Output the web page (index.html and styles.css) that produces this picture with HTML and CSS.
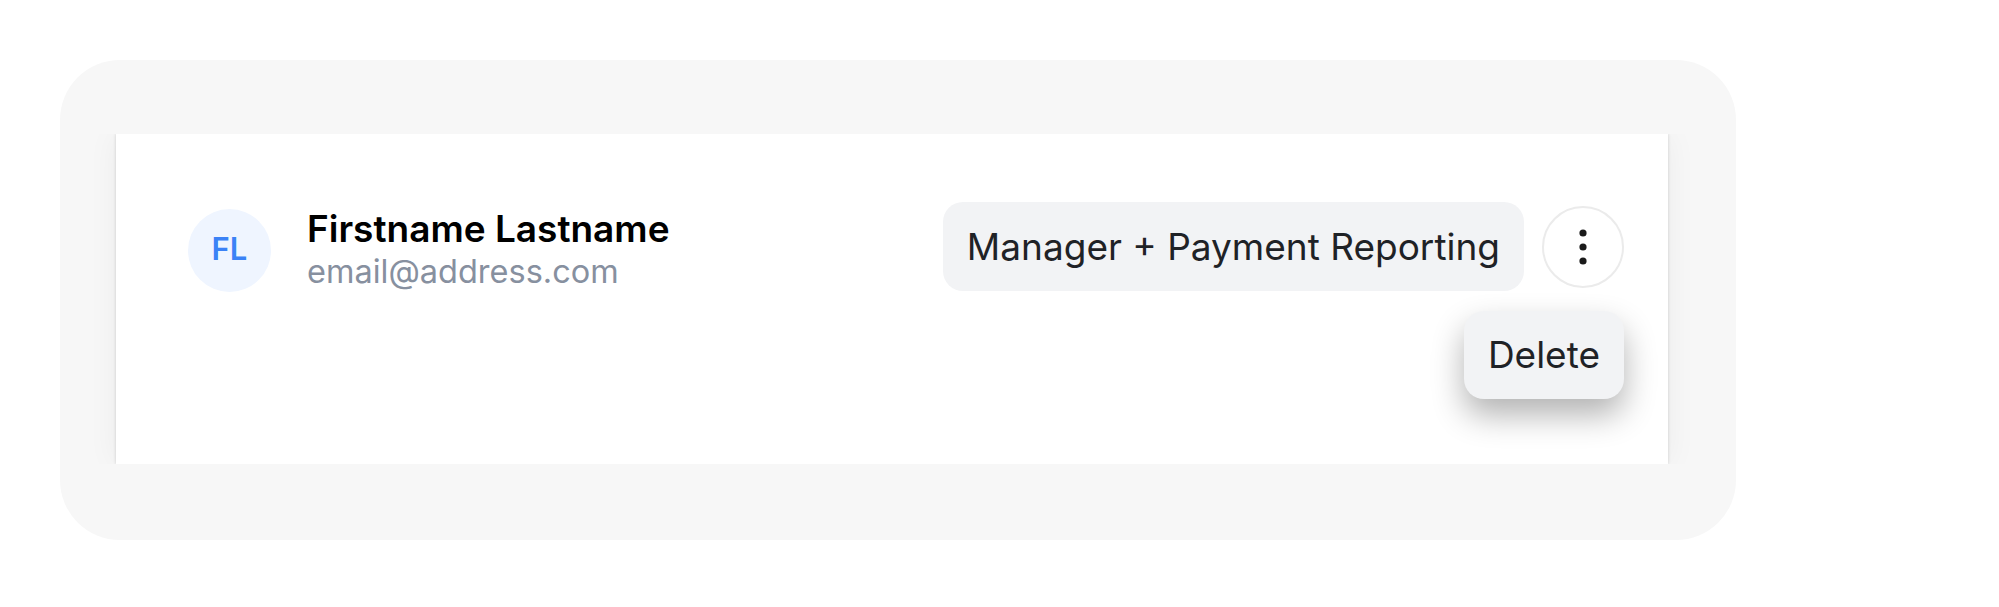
FILE: index.html
```html
<!DOCTYPE html>
<html lang="en">
<head>
<meta charset="utf-8">
<title>Member row</title>
<link rel="stylesheet" href="styles.css">
</head>
<body>
<div class="frame">
  <div class="card">
    <div class="row">
      <div class="person">
        <div class="avatar">FL</div>
        <div class="ident">
          <div class="name">Firstname Lastname</div>
          <div class="email">email@address.com</div>
        </div>
      </div>
      <div class="actions">
        <div class="role">Manager + Payment Reporting</div>
        <div class="kebab-wrap">
          <button class="kebab" aria-label="More actions">
            <svg width="8" height="36" viewBox="0 0 8 36"><circle cx="4" cy="4" r="3.6" fill="#1a1a1a"/><circle cx="4" cy="18" r="3.6" fill="#1a1a1a"/><circle cx="4" cy="32" r="3.6" fill="#1a1a1a"/></svg>
          </button>
          <div class="menu">Delete</div>
        </div>
      </div>
    </div>
  </div>
</div>
</body>
</html>
```

FILE: styles.css
```css
* { box-sizing: border-box; }
html, body { margin: 0; padding: 0; background: #ffffff; }
body { font-family: Inter, "Noto Sans", sans-serif; }

.frame {
  margin: 60px 0 0 60px;
  width: 1676px;
  height: 480px;
  background: #f7f7f7;
  border-radius: 60px;
  padding: 74px 68px 76px 56px;
  display: flex;
}

.card {
  flex: 1;
  background: #ffffff;
  overflow: hidden;
  clip-path: inset(0 -40px);
  box-shadow: 0 0 3px rgba(0,0,0,0.16), 0 0 30px rgba(0,0,0,0.05);
  padding: 67px 44px 0 72px;
}

.row {
  display: flex;
  align-items: center;
  justify-content: space-between;
}

.person {
  display: flex;
  align-items: center;
  gap: 36px;
  padding-top: 8px;
}

.avatar {
  width: 83px;
  height: 83px;
  border-radius: 50%;
  background: #eff5ff;
  color: #3b82f6;
  font-size: 31px;
  font-weight: 600;
  display: flex;
  align-items: center;
  justify-content: center;
  padding-bottom: 4px;
}

.ident { display: flex; flex-direction: column; gap: 3px; }
.name { font-size: 37px; font-weight: 600; color: #000; line-height: 40px; }
.email { font-size: 32.5px; color: #87909f; line-height: 40px; }

.actions {
  display: flex;
  align-items: center;
  gap: 18px;
}

.role {
  height: 89px;
  padding: 0 24px;
  display: flex;
  align-items: center;
  background: #f2f3f5;
  border-radius: 20px;
  font-size: 37px;
  color: #1f2226;
}

.kebab-wrap { position: relative; }

.kebab {
  width: 82px;
  height: 82px;
  border-radius: 50%;
  border: 2px solid #ebebeb;
  background: #fff;
  display: flex;
  align-items: center;
  justify-content: center;
  padding: 0;
}

.menu {
  position: absolute;
  top: calc(100% + 23px);
  right: 0;
  height: 88px;
  padding: 0 24px;
  display: flex;
  align-items: center;
  background: #f2f3f5;
  border-radius: 20px;
  font-size: 37px;
  color: #1f2226;
  box-shadow: 0 16px 32px rgba(0,0,0,0.3);
}
```
